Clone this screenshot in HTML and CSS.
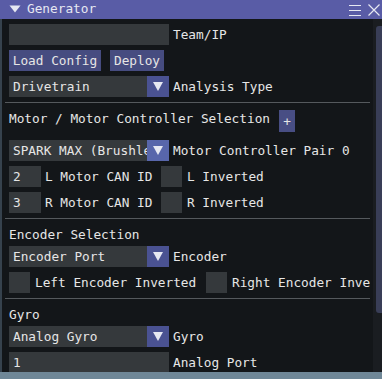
FILE: index.html
```html
<!DOCTYPE html>
<html>
<head>
<meta charset="utf-8">
<link rel="stylesheet" href="styles.css">
</head>
<body>
<div class="window">
  <div class="titlebar">
    <svg class="collapse" width="12" height="8" viewBox="0 0 12 8"><path d="M0.5 0.5H11.5L6 7.5Z" fill="#e6e8f2"/></svg>
    <span class="title">Generator</span>
    <span class="spacer"></span>
    <svg class="menu" width="12" height="12" viewBox="0 0 12 12"><path d="M0 1.5H12M0 6.5H12M0 11.5H12" stroke="#e6e8f2" stroke-width="1"/></svg>
    <svg class="close" width="12" height="12" viewBox="0 0 12 12"><path d="M0.5 0.5L11.5 11.5M11.5 0.5L0.5 11.5" stroke="#e6e8f2" stroke-width="1.2"/></svg>
  </div>
  <div class="body">
    <div class="content">
      <div class="row"><div class="frame w160"></div><span class="label">Team/IP</span></div>
      <div class="row">
        <div class="button w92">Load Config</div>
        <div class="button w54 ml9">Deploy</div>
      </div>
      <div class="row">
        <div class="combo w160"><span class="combo-text">Drivetrain</span><span class="arrow"><svg width="10" height="9" viewBox="0 0 10 9"><path d="M0 0H10L5 9Z" fill="#e6e8f2"/></svg></span></div>
        <span class="label">Analysis Type</span>
      </div>
      <div class="sep"></div>
      <div class="row head-row">
        <span class="heading">Motor / Motor Controller Selection</span>
        <div class="button plus">+</div>
      </div>
      <div class="row">
        <div class="combo w160"><span class="combo-text">SPARK MAX (Brushless)</span><span class="arrow hot"><svg width="10" height="9" viewBox="0 0 10 9"><path d="M0 0H10L5 9Z" fill="#e6e8f2"/></svg></span></div>
        <span class="label">Motor Controller Pair 0</span>
      </div>
      <div class="row">
        <div class="frame w32"><span class="val">2</span></div>
        <span class="label wl112">L Motor CAN ID</span>
        <div class="check"></div>
        <span class="label">L Inverted</span>
      </div>
      <div class="row">
        <div class="frame w32"><span class="val">3</span></div>
        <span class="label wl112">R Motor CAN ID</span>
        <div class="check"></div>
        <span class="label">R Inverted</span>
      </div>
      <div class="sep"></div>
      <div class="text-row">Encoder Selection</div>
      <div class="row">
        <div class="combo w160"><span class="combo-text">Encoder Port</span><span class="arrow"><svg width="10" height="9" viewBox="0 0 10 9"><path d="M0 0H10L5 9Z" fill="#e6e8f2"/></svg></span></div>
        <span class="label">Encoder</span>
      </div>
      <div class="row">
        <div class="check"></div>
        <span class="label wl170">Left Encoder Inverted</span>
        <div class="check"></div>
        <span class="label">Right Encoder Inverted</span>
      </div>
      <div class="sep"></div>
      <div class="text-row">Gyro</div>
      <div class="row">
        <div class="combo w160"><span class="combo-text">Analog Gyro</span><span class="arrow"><svg width="10" height="9" viewBox="0 0 10 9"><path d="M0 0H10L5 9Z" fill="#e6e8f2"/></svg></span></div>
        <span class="label">Gyro</span>
      </div>
      <div class="row">
        <div class="frame w160"><span class="val">1</span></div>
        <span class="label">Analog Port</span>
      </div>
    </div>
    <div class="scrollbar"><div class="thumb"></div></div>
  </div>
</div>
</body>
</html>
```

FILE: styles.css
```css
html, body {
  margin: 0;
  padding: 0;
}
body {
  width: 382px;
  height: 379px;
  overflow: hidden;
  background: #6f8797;
  font-family: "DejaVu Sans Mono", "Liberation Mono", monospace;
  font-size: 12.75px;
  color: #e6e6e6;
}
.window {
  width: 382px;
  height: 372px;
  background: #131619;
  display: flex;
  flex-direction: column;
  overflow: hidden;
}
.titlebar {
  height: 19px;
  flex: none;
  background: #595ca6;
  display: flex;
  align-items: flex-start;
  color: #e6e8f2;
}
.collapse {
  margin: 5px 0 0 9px;
  flex: none;
}
.title {
  margin-left: 6px;
  line-height: 17px;
}
.spacer {
  flex: 1;
}
.menu {
  margin: 4px 0 0 0;
  flex: none;
}
.close {
  margin: 4px 2px 0 7px;
  flex: none;
}
.body {
  flex: 1;
  display: flex;
  border-left: 2px solid #36424d;
  min-height: 0;
}
.content {
  width: 365px;
  margin-left: 3px;
  margin-right: 3px;
  padding-top: 5px;
  overflow: hidden;
  flex: none;
}
.scrollbar {
  width: 9px;
  flex: none;
  background: #1a1d21;
  position: relative;
}
.thumb {
  position: absolute;
  left: 3px;
  right: 0;
  top: 7px;
  height: 287px;
  background: #393e57;
  border-radius: 3px 0 0 3px;
}
.row {
  display: flex;
  align-items: center;
  height: 21px;
  margin-bottom: 5px;
  padding-left: 4px;
  white-space: nowrap;
}
.head-row {
  height: 27px;
  align-items: flex-start;
}
.heading {
  line-height: 17px;
  padding-top: 2px;
}
.text-row {
  height: 17px;
  line-height: 17px;
  padding-left: 4px;
  margin-bottom: 5px;
  padding-top: 2px;
  box-sizing: border-box;
  white-space: nowrap;
}
.sep {
  height: 1px;
  background: #55595d;
  margin-bottom: 5px;
}
.frame {
  height: 21px;
  background: #35393c;
  flex: none;
  display: flex;
  align-items: center;
  box-sizing: border-box;
  padding-left: 4px;
}
.w160 { width: 160px; }
.w32 { width: 32px; }
.w92 { width: 92px; }
.w54 { width: 54px; }
.ml9 { margin-left: 9px; }
.label {
  margin-left: 4px;
  flex: none;
}
.wl112 { width: 112px; }
.wl170 { width: 167px; }
.button {
  height: 21px;
  background: #464c80;
  display: flex;
  align-items: center;
  justify-content: center;
  flex: none;
}
.plus {
  width: 16px;
  height: 22px;
  margin-left: 9px;
  margin-top: 2px;
  background: #484e84;
}
.combo {
  height: 21px;
  background: #35393c;
  display: flex;
  flex: none;
  overflow: hidden;
}
.combo-text {
  width: 138px;
  padding-left: 4px;
  box-sizing: border-box;
  line-height: 21px;
  overflow: hidden;
  white-space: nowrap;
}
.arrow {
  width: 22px;
  height: 21px;
  background: #4a5292;
  display: flex;
  align-items: center;
  justify-content: center;
  flex: none;
}
.arrow.hot {
  background: #5866ab;
}
.check {
  width: 21px;
  height: 21px;
  background: #35393c;
  flex: none;
}
.check + .label {
  margin-left: 5px;
}
.row > .label + .check {
  margin-left: 4px;
}
```
